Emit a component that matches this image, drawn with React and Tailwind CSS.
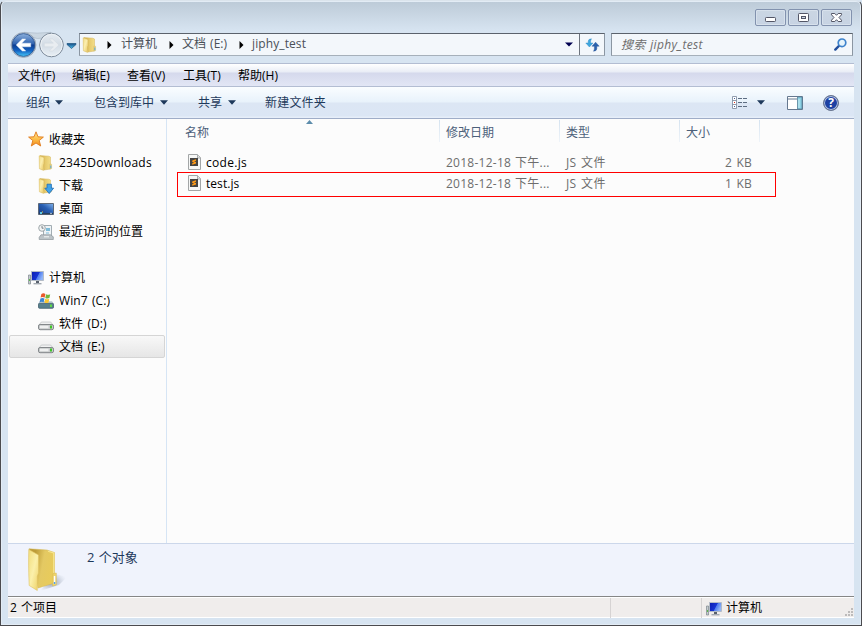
import React from "react";

const StarIcon = () => (
  <svg width="16" height="16" viewBox="0 0 16 16" className="-mt-px">
    <defs>
      <linearGradient id="star" x1="0" y1="0" x2="0" y2="1">
        <stop offset="0" stopColor="#ffe39a" />
        <stop offset="0.5" stopColor="#fdc04a" />
        <stop offset="1" stopColor="#f08a1d" />
      </linearGradient>
    </defs>
    <path d="M8 .8 10 5.8 15.4 6.1 11.2 9.5 12.7 15 8 12 3.3 15 4.8 9.5 .6 6.1 6 5.8Z" fill="url(#star)" stroke="#e07a1c" strokeWidth="0.9" strokeLinejoin="round" />
  </svg>
);

const FolderIcon = ({ download }) => (
  <svg width="16" height="16" viewBox="0 0 16 16">
    <defs>
      <linearGradient id="leaf" x1="0" y1="0" x2="1" y2="1">
        <stop offset="0" stopColor="#f3dd83" />
        <stop offset="0.45" stopColor="#fbeeb0" />
        <stop offset="1" stopColor="#e6c45a" />
      </linearGradient>
      <linearGradient id="inner" x1="0" y1="0" x2="1" y2="0">
        <stop offset="0" stopColor="#c9a547" />
        <stop offset="0.5" stopColor="#e6ca6c" />
        <stop offset="1" stopColor="#f2dd88" />
      </linearGradient>
    </defs>
    <path d="M2 .6 10.8 1.2 12.5 2v12L6 15z" fill="url(#inner)" stroke="#d6b75a" strokeWidth="0.5" />
    <path d="M1.2.8 6 2.6v6.2l-.4 1v5.6L1.4 13.8z" fill="url(#leaf)" stroke="#d6b658" strokeWidth="0.5" />
    <path d="M11.8 9.2h1.8v4.4l-1.8.5z" fill="#f1d980" stroke="#d2b458" strokeWidth="0.4" />
    {download ? (
      <path d="M9 6.2h4.4v4h2.2L11.2 15.6 6.8 10.2H9z" fill="#3fa3ea" stroke="#1c69b5" strokeWidth="0.8" />
    ) : (
      <path d="M12.3 10.6h1v2.6h-1z" fill="#58a9e2" />
    )}
  </svg>
);

const DesktopIcon = () => (
  <svg width="16" height="16" viewBox="0 0 16 16">
    <defs>
      <linearGradient id="desk" x1="0" y1="1" x2="1" y2="0">
        <stop offset="0" stopColor="#15397e" />
        <stop offset="0.55" stopColor="#285fb3" />
        <stop offset="1" stopColor="#83b5ed" />
      </linearGradient>
    </defs>
    <path d="M.5 2.5h15v11H.5z" fill="url(#desk)" stroke="#5c6879" />
    <path d="M1 12h14v1.2H1z" fill="#26405f" />
    <path d="M2 11h2v2H2z" fill="#5cc8e8" />
    <path d="M4 10.5h1v1H4z" fill="#f4c33d" />
    <path d="M12 12.3h2" stroke="#d9e7f3" strokeWidth="0.8" />
  </svg>
);

const RecentIcon = () => (
  <svg width="16" height="16" viewBox="0 0 16 16">
    <path d="M5.5 1.5h8v10h-8z" fill="#eef3f6" stroke="#a2adb3" />
    <path d="M8 4h4v3H8zM8 8.5h3v1H8z" fill="#7fbcd8" />
    <path d="M3 10.8h9.5l2.8 2v2.7H1.2v-2.2z" fill="#bcc3c7" stroke="#8b9499" strokeWidth="0.7" />
    <circle cx="4" cy="4" r="3.3" fill="#f3f5f5" stroke="#959ea3" strokeWidth="0.9" />
    <path d="M4 2v2.2h1.6" fill="none" stroke="#59656c" strokeWidth="0.8" />
    <path d="M6 12.8h5" stroke="#f6f8f8" />
  </svg>
);

const ComputerIcon = () => (
  <svg width="16" height="16" viewBox="0 0 16 16">
    <defs>
      <linearGradient id="screen" x1="0" y1="0" x2="1" y2="0.4">
        <stop offset="0" stopColor="#0a1cae" />
        <stop offset="0.6" stopColor="#1734d4" />
        <stop offset="0.65" stopColor="#4e7bee" />
        <stop offset="1" stopColor="#8fb4f8" />
      </linearGradient>
    </defs>
    <path d="M.5 5h2v9h-2z" fill="#c5cbd0" stroke="#7d868d" strokeWidth="0.7" />
    <path d="M1 9h1v2H1z" fill="#5bb849" />
    <path d="M3.5 1.5h12v9h-12z" fill="url(#screen)" stroke="#b4bcc6" />
    <path d="M8 11h3v2H8z" fill="#59616d" />
    <path d="M5.5 13h8v1.4h-8z" fill="#a2a9b1" />
  </svg>
);

const DriveIcon = () => (
  <svg width="16" height="16" viewBox="0 0 16 16" className="mt-px">
    <path d="M3.3 6h9.4l2.6 3.5H.7z" fill="#f0f1f1" stroke="#b4b7b9" strokeWidth="0.6" />
    <rect x="0.5" y="8.5" width="15" height="5.2" rx="1.6" fill="#c9cccd" stroke="#797e81" strokeWidth="0.9" />
    <path d="M2 9.8h8.5v2.4H2z" fill="#eff0f0" />
    <path d="M12 9.5h2v3h-2z" fill="#3ec628" />
  </svg>
);

const WinDriveIcon = () => (
  <svg width="16" height="16" viewBox="0 0 16 16">
    <path d="M2 8h12l1.5 2.5H.5z" fill="#c6d3da" />
    <rect x="0.5" y="10.3" width="15" height="5" rx="1" fill="#57808d" stroke="#44616e" strokeWidth="0.8" />
    <path d="M12 11.5h2v2.5h-2z" fill="#5edb47" />
    <path d="M3.4.9Q5.6-.3 7.4 1L6.6 4.7Q4.7 3.6 2.6 4.6Z" fill="#ea5a2c" />
    <path d="M8.1 1.3Q10 2.3 12.2 1.3L11.4 5Q9.3 6 7.3 4.9Z" fill="#73b83c" />
    <path d="M2.4 5.4Q4.6 4.4 6.5 5.5L5.7 9.2Q3.7 8.2 1.6 9.2Z" fill="#3c87d3" />
    <path d="M7.2 5.8Q9.2 6.9 11.3 5.8L10.5 9.5Q8.4 10.6 6.4 9.5Z" fill="#fac62f" />
  </svg>
);

const ScriptFileIcon = () => (
  <svg width="14" height="16" viewBox="0 0 14 16" className="shrink-0 -mt-px">
    <path d="M.5.5h9l3 3v12H.5z" fill="#f6f7f6" stroke="#a3a6a7" />
    <path d="M9.5.5v3.5h3" fill="#e1e4e5" stroke="#a9adaf" />
    <path d="M2 4h8v8H2z" fill="#454443" />
    <path d="M8 5.2 4.2 6.5V8l2 .5-2 .7v1.6L8 9.5V8l-2-.5 2-.7z" fill="#ff9a16" />
  </svg>
);

const BigFolderIcon = () => (
  <svg width="40" height="44" viewBox="0 0 40 44">
    <defs>
      <linearGradient id="flap" x1="0" y1="0" x2="1" y2="1">
        <stop offset="0" stopColor="#f1dc7b" />
        <stop offset="0.5" stopColor="#fbf0ab" />
        <stop offset="1" stopColor="#edd165" />
      </linearGradient>
      <linearGradient id="back" x1="0" y1="0" x2="1" y2="0.3">
        <stop offset="0.25" stopColor="#bd9c38" />
        <stop offset="0.6" stopColor="#e4c963" />
        <stop offset="1" stopColor="#e8cb5b" />
      </linearGradient>
      <radialGradient id="shade" cx="0.4" cy="0.5" r="0.6">
        <stop offset="0" stopColor="#6f7a8c" stopOpacity="0.8" />
        <stop offset="1" stopColor="#b5bfd0" stopOpacity="0" />
      </radialGradient>
    </defs>
    <path d="M24 25 39 29 31 37 12 43 20 34z" fill="url(#shade)" />
    <path d="M1 .8 19 2 26.5 4.5V35L10 40z" fill="url(#back)" stroke="#d5b955" strokeWidth="0.5" />
    <path d="M20 3.2 25.7 5V26" fill="none" stroke="#f7e58d" strokeWidth="1.2" />
    <path d="M25 25.5 28.3 25V37L24.5 38z" fill="#efd56b" stroke="#d5b753" strokeWidth="0.5" />
    <path d="M25.8 28h1.5v8h-1.5z" fill="#fff" />
    <path d="M25.8 34h1.5v2h-1.5z" fill="#4fa0f0" />
    <path d="M.8 1.5 10.5 7V25L9.3 28V42.5L1.2 37.5Q.2 16 .8 1.5z" fill="url(#flap)" stroke="#dfc363" strokeWidth="0.6" />
  </svg>
);

const NavButtons = () => (
  <svg width="70" height="28" viewBox="0 0 70 28" className="shrink-0">
    <defs>
      <linearGradient id="backBtn" x1="0" y1="0" x2="0" y2="1">
        <stop offset="0" stopColor="#8cb0dc" />
        <stop offset="0.45" stopColor="#2f62b0" />
        <stop offset="0.5" stopColor="#0c3c91" />
        <stop offset="0.75" stopColor="#1464c4" />
        <stop offset="1" stopColor="#46c8f8" />
      </linearGradient>
      <linearGradient id="fwdBtn" x1="0" y1="0" x2="0" y2="1">
        <stop offset="0" stopColor="#e6ecf2" />
        <stop offset="0.5" stopColor="#d3dce5" />
        <stop offset="1" stopColor="#e9f0f6" />
      </linearGradient>
      <linearGradient id="tick" x1="0" y1="0" x2="0" y2="1">
        <stop offset="0" stopColor="#174e86" />
        <stop offset="1" stopColor="#4fc0ee" />
      </linearGradient>
    </defs>
    <path d="M15 1.3Q28 3 42 1.3L34 7Q28 8.5 23 6z" fill="#cbd7e2" stroke="#a8b5c2" strokeWidth="0.6" />
    <circle cx="14.5" cy="14" r="12.4" fill="#e1eaf2" stroke="#8593a5" strokeWidth="0.8" />
    <circle cx="14.5" cy="14" r="11.4" fill="url(#backBtn)" stroke="#244b86" strokeWidth="0.8" />
    <path d="M7.2 14 13.3 8h3.4l-4 4.2h9v3.6h-9l4 4.2h-3.4z" fill="#fff" stroke="#e6f1fb" strokeWidth="0.5" />
    <circle cx="42.5" cy="14" r="11.8" fill="url(#fwdBtn)" stroke="#7a8797" />
    <circle cx="42.5" cy="14" r="10.7" fill="none" stroke="#edf2f6" />
    <path d="M49.8 14 43.7 8h-3.4l4 4.2h-9v3.6h9l-4 4.2h3.4z" fill="#e9edf1" stroke="#ccd4dc" strokeWidth="0.4" />
    <path d="M58 12.5h9v1l-4.5 4-4.5-4z" fill="url(#tick)" stroke="#1d5580" strokeWidth="0.7" />
  </svg>
);

const CrumbArrow = () => (
  <svg width="5" height="8" viewBox="0 0 5 8" className="shrink-0">
    <path d="M.5 0 4.5 4 .5 8z" fill="#000" />
  </svg>
);

const DownArrow = () => (
  <svg width="8" height="5" viewBox="0 0 8 5" className="shrink-0">
    <path d="M0 .2h8L4 4.7z" fill="#1e395b" />
  </svg>
);

const crumbs = [
  { label: "计算机", style: "ml-[9px] w-[48px]" },
  { label: "文档 (E:)", style: "ml-[8px] w-[57px]" },
  { label: "jiphy_test", style: "ml-[8px] tracking-[0.1px]" },
];

const menus = [
  { label: "文件(F)", style: "w-[54px]" },
  { label: "编辑(E)", style: "w-[55px]" },
  { label: "查看(V)", style: "w-[56px]" },
  { label: "工具(T)", style: "w-[55px]" },
  { label: "帮助(H)", style: "w-[55px]" },
];

const favorites = [
  { label: "2345Downloads", icon: <FolderIcon />, style: "tracking-[0.22px]" },
  { label: "下载", icon: <FolderIcon download /> },
  { label: "桌面", icon: <DesktopIcon /> },
  { label: "最近访问的位置", icon: <RecentIcon /> },
];

const drives = [
  { label: "Win7 (C:)", icon: <WinDriveIcon /> },
  { label: "软件 (D:)", icon: <DriveIcon /> },
  { label: "文档 (E:)", icon: <DriveIcon />, selected: true },
];

const files = [
  { name: "code.js", size: "2 KB", style: "tracking-[0.3px]" },
  { name: "test.js", size: "1 KB", style: "tracking-[0.05px]" },
];

const CaptionButton = ({ children }) => (
  <div className="w-[31px] h-[17px] rounded-[2px] border border-[#8292ae] bg-gradient-to-b from-[#cad6e3] to-[#c7d3e3] shadow-[inset_0_0_0_1px_#d7e1ec] flex justify-center">
    <svg width="29" height="15" viewBox="0 0 29 15" fill="#fff" stroke="#535666">
      {children}
    </svg>
  </div>
);

const WindowButtons = () => (
  <div className="flex gap-[2px] pt-[8px] pr-[8px] justify-end">
    <CaptionButton>
      <rect x="9.5" y="7.5" width="10" height="4" rx="0.8" />
    </CaptionButton>
    <CaptionButton>
      <rect x="9.5" y="3.5" width="10" height="8" rx="0.8" />
      <rect x="12.5" y="6.5" width="4" height="2" fill="#cbd6e3" />
    </CaptionButton>
    <CaptionButton>
      <path d="M9.5 3.5h3.3l1.7 1.8 1.7-1.8h3.3v1.3L17 7.5l2.5 2.7v1.3h-3.3l-1.7-1.8-1.7 1.8H9.5v-1.3L12 7.5 9.5 4.8z" />
    </CaptionButton>
  </div>
);

const AddressRow = () => (
  <div className="h-[37px] flex items-start pt-[7px]">
    <div className="-mt-[2px] ml-[8px] flex">
      <NavButtons />
    </div>
    <div className="w-[526px] h-[23px] flex border border-[#8b96a2] border-t-[#5b626c] border-b-[#a6b0ba] bg-[#f3f7fb] text-[#4a5058]">
      <div className="flex-1 flex items-center pl-[2px]">
        <FolderIcon />
        {crumbs.map((crumb, index) => (
          <React.Fragment key={crumb.label}>
            <span className={index === 0 ? "ml-[9px] flex" : "flex"}>
              <CrumbArrow />
            </span>
            <span className={`-mt-px ${crumb.style}`}>{crumb.label}</span>
          </React.Fragment>
        ))}
        <svg width="8" height="5" viewBox="0 0 8 5" className="ml-auto mr-[6px]">
          <path d="M0 .5h8L4 4.5z" fill="#000050" />
        </svg>
      </div>
      <div className="w-[25px] border-l border-[#6d747e] flex items-center justify-center">
        <svg width="15" height="14" viewBox="0 0 15 14">
          <path d="M6.5.8Q3.2.8 3.2 3.5V5H.8l3.6 4L8 5H5.6V3.6Q5.6 2.2 6.5.8Z" fill="#3fa7dd" stroke="#2b85c6" strokeWidth="0.4" />
          <path d="M8.5 13.2q3.3 0 3.3-2.7V8.2h2.4l-3.6-4L7 8.2h2.4v2.2q0 1.4-.9 2.8Z" fill="#2b62ae" stroke="#204d90" strokeWidth="0.4" />
        </svg>
      </div>
    </div>
    <div className="ml-[6px] w-[242px] h-[23px] flex items-center border border-[#8b96a2] border-t-[#5b626c] border-b-[#a6b0ba] bg-[#f3f7fb] pl-[9px] pr-[5px]">
      <span className="italic text-[#6d6d6d] tracking-[0.35px] [word-spacing:1px]">搜索 jiphy_test</span>
      <svg width="13" height="13" viewBox="0 0 13 13" className="ml-auto">
        <path d="M5.3 7.5 1.3 11.6" stroke="#224e9b" strokeWidth="2.4" strokeLinecap="round" />
        <circle cx="8" cy="4.8" r="3.8" fill="#e6f4fc" stroke="#3e83cc" strokeWidth="1.7" />
      </svg>
    </div>
  </div>
);

const Toolbar = () => (
  <div className="h-[32px] shrink-0 border-b border-[#9fadc8] bg-[linear-gradient(#fafdff_0px,#e8f2fb_15px,#dce6f4_16px,#dbe6f5_29px,#e6eef9_30px)] flex items-center text-[#1e395b] pl-[18px]">
    <div className="w-[68px] flex items-center gap-[5px]">组织 <DownArrow /></div>
    <div className="w-[104px] flex items-center gap-[6px]">包含到库中 <DownArrow /></div>
    <div className="w-[67px] flex items-center gap-[6px]">共享 <DownArrow /></div>
    <div className="tracking-[0.2px]">新建文件夹</div>
    <div className="ml-auto flex items-center pr-[15px]">
      <svg width="16" height="14" viewBox="0 0 16 14">
        <path d="M.5.5h4v12h-4zM.5 4.5h4M.5 8.5h4" fill="#fff" stroke="#8592a5" strokeWidth="0.9" />
        <path d="M2 2h1v1H2zM2 10h1v1H2z" fill="#40609b" />
        <path d="M2 6h1v1H2z" fill="#e0301e" />
        <path d="M6 2.5h4M11 2.5h4M6 6.5h4M11 6.5h4M6 10.5h4M11 10.5h4" stroke="#5d6d82" />
      </svg>
      <span className="ml-[9px] flex"><DownArrow /></span>
      <svg width="16" height="14" viewBox="0 0 16 14" className="ml-[22px]">
        <path d="M.5.5h15v13H.5z" fill="#fff" stroke="#65788f" />
        <path d="M1 3h9" stroke="#65788f" />
        <path d="M10.5 1h4.5v12h-4.5z" fill="#8cd1e4" stroke="#547f98" strokeWidth="0.8" />
        <path d="M12 3v9" stroke="#c8eef5" />
      </svg>
      <div className="ml-[20px] w-4 h-4 rounded-full border border-[#6d7990] bg-[#1d41a3] ring-1 ring-inset ring-[#b6c5e2] flex items-center justify-center text-white font-bold leading-none">
        ?
      </div>
    </div>
  </div>
);

const Sidebar = () => (
  <div className="w-[159px] shrink-0 border-r border-[#d6e5f5] pt-[9px] text-black">
    <div className="h-[23px] flex items-center pl-[20px] gap-[5px]">
      <StarIcon />
      <span>收藏夹</span>
    </div>
    {favorites.map((item) => (
      <div key={item.label} className="h-[23px] flex items-center pl-[30px] gap-[5px]">
        {item.icon}
        <span className={item.style}>{item.label}</span>
      </div>
    ))}
    <div className="h-[23px] mt-[23px] flex items-center pl-[20px] gap-[5px]">
      <ComputerIcon />
      <span>计算机</span>
    </div>
    {drives.map((item) => (
      <div
        key={item.label}
        className={`h-[23px] ml-px mr-px flex items-center pl-[28px] gap-[5px] border rounded-[2px] ${
          item.selected ? "border-[#d5d5d5] bg-gradient-to-b from-[#f8f8f8] to-[#e6e6e6]" : "border-transparent"
        }`}
      >
        {item.icon}
        <span className="tracking-[0.1px]">{item.label}</span>
      </div>
    ))}
  </div>
);

const HeaderCell = ({ className, children }) => (
  <div className={`h-[24px] flex items-center pt-[3px] ${className}`}>
    <span className="flex-1">{children}</span>
    <span className="w-px h-[22px] -mt-[3px] bg-gradient-to-b from-[#d5e3f0] to-[#eff4f9]"></span>
  </div>
);

const FileList = () => (
  <div className="flex-1 relative text-[#6d6d6d]">
    <div className="flex text-[#4c607a]">
      <HeaderCell className="w-[273px] pl-[18px]">名称</HeaderCell>
      <HeaderCell className="w-[120px] pl-[6px]">修改日期</HeaderCell>
      <HeaderCell className="w-[120px] pl-[6px]">类型</HeaderCell>
      <HeaderCell className="w-[80px] pl-[6px]">大小</HeaderCell>
    </div>
    <svg width="7" height="4" viewBox="0 0 7 4" className="absolute left-[139px] top-[1px]">
      <path d="M3.5 0 7 4H0z" fill="#5c8cab" />
    </svg>
    <div className="pt-[9px]">
      {files.map((file) => (
        <div key={file.name} className="h-[21px] flex items-center">
          <div className="w-[279px] pl-[21px] flex items-center gap-[4px] text-black">
            <ScriptFileIcon />
            <span className={file.style}>{file.name}</span>
          </div>
          <div className="w-[120px] tracking-[0.25px] [word-spacing:0.5px]">2018-12-18 下午...</div>
          <div className="w-[100px] tracking-[0.4px] [word-spacing:1px]">JS 文件</div>
          <div className="w-[86px] text-right [word-spacing:1px] tracking-[0.2px]">{file.size}</div>
        </div>
      ))}
    </div>
    <div className="absolute left-[10px] top-[53px] w-[599px] h-[25px] border border-[#f00]"></div>
  </div>
);

const StatusBar = () => (
  <div className="h-[22px] shrink-0 border-t border-[#868686] bg-[#f0edec] shadow-[inset_0_1px_0_#fff,inset_0_-1px_0_#fff] flex items-center text-black">
    <div className="w-[603px] pl-[2px] h-[20px] flex items-center border-r border-[#d6d3d3]">2 个项目</div>
    <div className="w-[91px] h-[20px] border-r border-[#d6d3d3]"></div>
    <div className="pl-[4px] flex items-center gap-[4px]">
      <span className="mt-[2px]"><ComputerIcon /></span>
      <span>计算机</span>
    </div>
    <svg width="10" height="10" viewBox="0 0 10 10" className="ml-auto self-end mb-[1px]">
      <path d="M7 1h2v2H7zM4 4h2v2H4zM7 4h2v2H7zM1 7h2v2H1zM4 7h2v2H4zM7 7h2v2H7z" fill="#bdbbbb" />
    </svg>
  </div>
);

export default function App() {
  return (
    <div className="w-[862px] h-[626px] overflow-hidden bg-[#d7e4f1] font-['Open_Sans','Noto_Sans_CJK_SC',sans-serif] text-[12px] leading-[16px] [word-spacing:1px] whitespace-nowrap">
      <div className="w-full h-full rounded-t-[6px] border border-[#4b4b4f] border-t-[#dbe4ec] shadow-[inset_0_0_0_1px_#e3ecf5] bg-[linear-gradient(#bccad7_0px,#d7e4f1_30px)] px-[7px] pb-[7px] flex flex-col">
        <div className="h-[25px] shrink-0 -mr-[7px] pr-[1px]">
          <WindowButtons />
        </div>
        <div className="-mx-[7px] shrink-0">
          <AddressRow />
        </div>
        <div className="flex-1 flex flex-col min-h-0">
          <div className="h-[24px] shrink-0 border-t border-b border-[#b3bdd2] bg-[linear-gradient(#ffffff_0px,#e9edf6_8px,#d5d9ec_9px,#e2e6f5_22px)] flex items-center pt-[2px] pl-[10px] text-black">
            {menus.map((menu) => (
              <span key={menu.label} className={menu.style}>{menu.label}</span>
            ))}
          </div>
          <Toolbar />
          <div className="flex-1 min-h-0 flex bg-[#fcfcfc]">
            <Sidebar />
            <FileList />
          </div>
          <div className="h-[53px] shrink-0 border-t border-[#ccd7ea] bg-[#f0f3fc] flex items-start pl-[20px] text-[#1e395b]">
            <div className="pt-[4px]">
              <BigFolderIcon />
            </div>
            <span className="ml-[19px] pt-[5px] text-[13px]">2 个对象</span>
          </div>
          <StatusBar />
        </div>
      </div>
    </div>
  );
}
